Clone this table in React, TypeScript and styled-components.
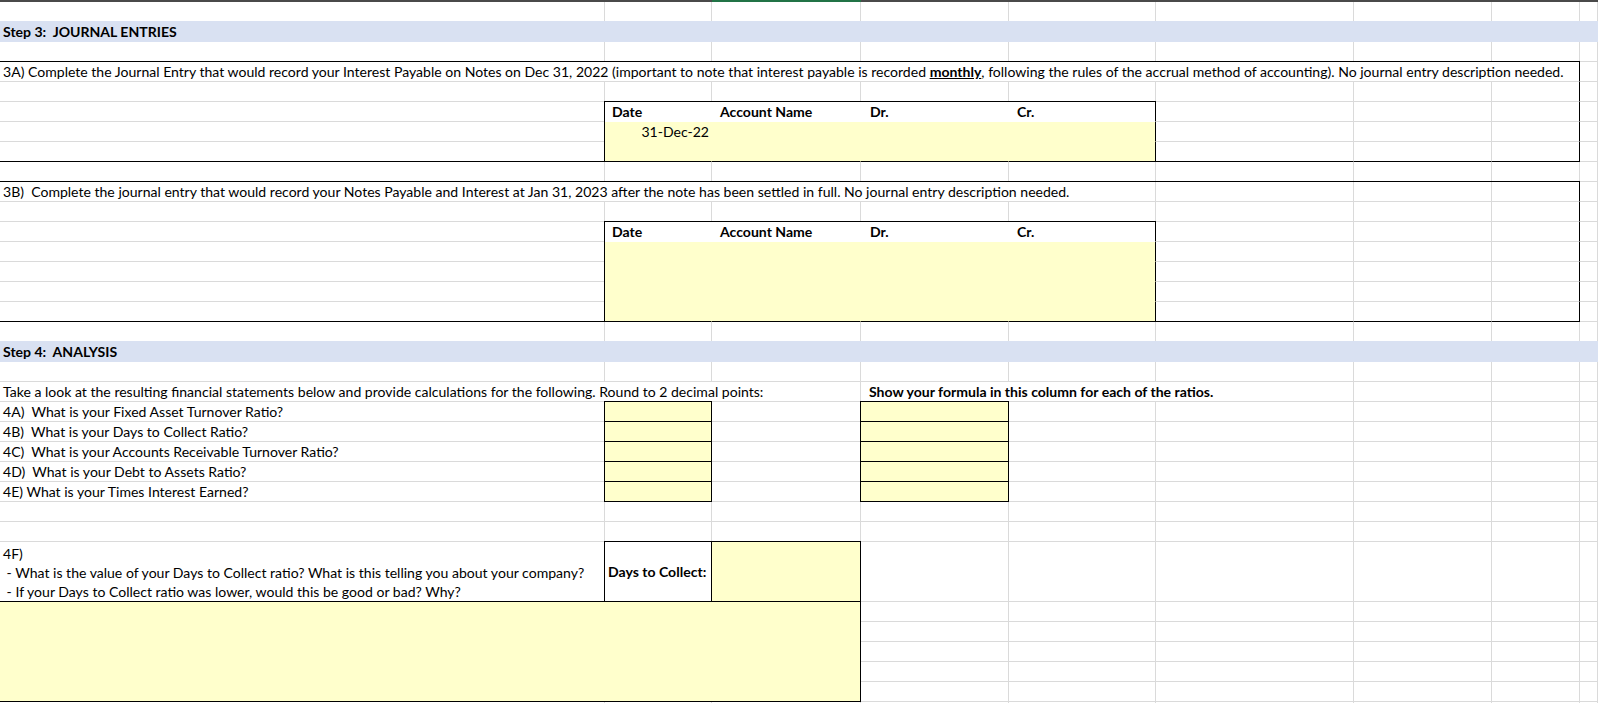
import React from 'react';
import styled, { createGlobalStyle } from 'styled-components';

const GRID = '#dadada';
const YELLOW = '#ffffcc';
const BAND = '#d9e1f2';
const BLACK = '#000000';
const COLS = '605px 107px 149px 148px 147px 198px 138px 88px 1fr';

const GlobalStyle = createGlobalStyle`
  html, body {
    margin: 0;
    padding: 0;
    background: #ffffff;
    overflow: hidden;
  }
  body {
    font-family: Lato, "Liberation Sans", sans-serif;
    font-size: 14.05px;
    color: #000000;
  }
`;

const Page = styled.div`
  width: 1598px;
  height: 703px;
  overflow: hidden;
  background: #ffffff;
`;

const TopBar = styled.div`
  display: grid;
  grid-template-columns: ${COLS};
  height: 2px;
`;

const TopSegment = styled.div<{ $active?: boolean }>`
  background: ${p => (p.$active ? '#217346' : '#4a4a4a')};
`;

const Sheet = styled.div`
  display: grid;
  grid-template-columns: ${COLS};
  grid-template-rows: repeat(27, 20px) 60px repeat(6, 20px);
`;

interface CellProps {
  $span?: number;
  $rowSpan?: number;
  $fill?: string;
  $right?: string;
  $bottom?: string;
  $top?: string;
  $left?: string;
  $align?: 'left' | 'right';
  $valign?: 'end' | 'center';
  $bold?: boolean;
  $indent?: number;
}

const shadowOf = (top?: string, left?: string) => {
  const parts: string[] = [];
  if (top) parts.push(`0 -1px 0 ${top}`);
  if (left) parts.push(`-1px 0 0 ${left}`);
  if (top && left) parts.push(`-1px -1px 0 ${top}`);
  return parts.length ? parts.join(', ') : 'none';
};

const SheetCell = styled.div<CellProps>`
  box-sizing: border-box;
  grid-column: span ${p => p.$span ?? 1};
  grid-row: span ${p => p.$rowSpan ?? 1};
  min-width: 0;
  background: ${p => p.$fill ?? 'transparent'};
  border-right: 1px solid ${p => p.$right ?? (p.$fill ? 'transparent' : GRID)};
  border-bottom: 1px solid ${p => p.$bottom ?? (p.$fill ? 'transparent' : GRID)};
  box-shadow: ${p => shadowOf(p.$top, p.$left)};
  display: flex;
  flex-direction: column;
  justify-content: ${p => (p.$valign === 'center' ? 'center' : 'flex-end')};
  align-items: ${p => (p.$align === 'right' ? 'flex-end' : 'flex-start')};
  padding-left: ${p => (p.$align === 'right' ? 0 : p.$indent ?? 3)}px;
  padding-right: ${p => (p.$align === 'right' ? 2 : 0)}px;
  font-weight: ${p => (p.$bold ? 700 : 400)};
  white-space: pre;
`;

const CellLine = styled.span<{ $tall?: boolean }>`
  display: block;
  line-height: ${p => (p.$tall ? 19 : 18)}px;
`;

const Emphasis = styled.span`
  font-weight: 700;
  text-decoration: underline;
`;

type Cell = {
  span?: number;
  rowSpan?: number;
  text?: React.ReactNode;
  lines?: string[];
  fill?: string;
  right?: string;
  bottom?: string;
  top?: string;
  left?: string;
  align?: 'right';
  valign?: 'center';
  bold?: boolean;
  indent?: number;
};

const plain = (n: number, extra: Partial<Cell> = {}): Cell[] => Array.from({ length: n }, () => ({ ...extra }));

const emptyRow = (): Cell[] => plain(9);

const bandRow = (label: string): Cell[] => [
  { span: 9, text: label, fill: BAND, top: BAND, bold: true },
];

const headerRow = (): Cell[] => [
  {},
  { text: 'Date', fill: '#ffffff', top: BLACK, left: BLACK, bold: true, indent: 7 },
  { text: 'Account Name', fill: '#ffffff', top: BLACK, bold: true, indent: 8 },
  { text: 'Dr.', fill: '#ffffff', top: BLACK, bold: true, indent: 9 },
  { text: 'Cr.', fill: '#ffffff', top: BLACK, right: BLACK, bold: true, indent: 8 },
  {},
  {},
  { right: BLACK },
  {},
];

const entryRow = (date?: string, last = false): Cell[] => {
  const b = last ? BLACK : undefined;
  return [
    { bottom: b },
    { fill: YELLOW, left: BLACK, bottom: b, text: date, align: 'right' },
    { fill: YELLOW, bottom: b },
    { fill: YELLOW, bottom: b },
    { fill: YELLOW, right: BLACK, bottom: b },
    { bottom: b },
    { bottom: b },
    { right: BLACK, bottom: b },
    {},
  ];
};

const boxedGapRow = (): Cell[] => [...plain(7), { right: BLACK }, {}];

const ratioRow = (q: string): Cell[] => [
  { text: q },
  { fill: YELLOW, top: BLACK, left: BLACK, right: BLACK, bottom: BLACK },
  {},
  { fill: YELLOW, top: BLACK, left: BLACK, right: BLACK, bottom: BLACK },
  ...plain(5),
];

const rows: Cell[][] = [
  emptyRow(),
  bandRow('Step 3:  JOURNAL ENTRIES'),
  emptyRow(),
  [
    {
      span: 8,
      top: BLACK,
      right: BLACK,
      text: (
        <>
          3A) Complete the Journal Entry that would record your Interest Payable on Notes on Dec 31, 2022 (important to note that interest payable is recorded{' '}
          <Emphasis>monthly</Emphasis>, following the rules of the accrual method of accounting). No journal entry description needed.
        </>
      ),
    },
    {},
  ],
  boxedGapRow(),
  headerRow(),
  entryRow('31-Dec-22'),
  entryRow(undefined, true),
  emptyRow(),
  [
    {
      span: 5,
      top: BLACK,
      text: '3B)  Complete the journal entry that would record your Notes Payable and Interest at Jan 31, 2023 after the note has been settled in full. No journal entry description needed.',
    },
    { top: BLACK },
    { top: BLACK },
    { top: BLACK, right: BLACK },
    {},
  ],
  boxedGapRow(),
  headerRow(),
  entryRow(),
  entryRow(),
  entryRow(),
  entryRow(undefined, true),
  emptyRow(),
  bandRow('Step 4:  ANALYSIS'),
  emptyRow(),
  [
    {
      span: 3,
      text: 'Take a look at the resulting financial statements below and provide calculations for the following. Round to 2 decimal points:',
    },
    { span: 3, text: 'Show your formula in this column for each of the ratios.', bold: true, indent: 8 },
    {},
    {},
    {},
  ],
  ratioRow('4A)  What is your Fixed Asset Turnover Ratio?'),
  ratioRow('4B)  What is your Days to Collect Ratio?'),
  ratioRow('4C)  What is your Accounts Receivable Turnover Ratio?'),
  ratioRow('4D)  What is your Debt to Assets Ratio?'),
  ratioRow('4E) What is your Times Interest Earned?'),
  emptyRow(),
  emptyRow(),
  [
    {
      bottom: BLACK,
      lines: [
        '4F)',
        ' - What is the value of your Days to Collect ratio? What is this telling you about your company?',
        ' - If your Days to Collect ratio was lower, would this be good or bad? Why?',
      ],
    },
    { text: 'Days to Collect:', bold: true, valign: 'center', top: BLACK, left: BLACK, right: BLACK, bottom: BLACK },
    { fill: YELLOW, top: BLACK, right: BLACK, bottom: BLACK },
    ...plain(6),
  ],
  [{ span: 3, rowSpan: 5, fill: YELLOW, right: BLACK, bottom: BLACK }, ...plain(6)],
  plain(6),
  plain(6),
  plain(6),
  plain(6),
  emptyRow(),
];

const COLUMN_COUNT = 9;

export default function App() {
  return (
    <Page>
      <GlobalStyle />
      <TopBar>
        {Array.from({ length: COLUMN_COUNT }, (_, i) => (
          <TopSegment key={i} $active={i === 2} />
        ))}
      </TopBar>
      <Sheet>
        {rows.map((row, r) =>
          row.map((c, i) => (
            <SheetCell
              key={`${r}-${i}`}
              $span={c.span}
              $rowSpan={c.rowSpan}
              $fill={c.fill}
              $right={c.right}
              $bottom={c.bottom}
              $top={c.top}
              $left={c.left}
              $align={c.align}
              $valign={c.valign}
              $bold={c.bold}
              $indent={c.indent}
            >
              {c.lines
                ? c.lines.map((l, k) => (
                    <CellLine key={k} $tall>
                      {l}
                    </CellLine>
                  ))
                : c.text !== undefined && <CellLine>{c.text}</CellLine>}
            </SheetCell>
          ))
        )}
      </Sheet>
    </Page>
  );
}
